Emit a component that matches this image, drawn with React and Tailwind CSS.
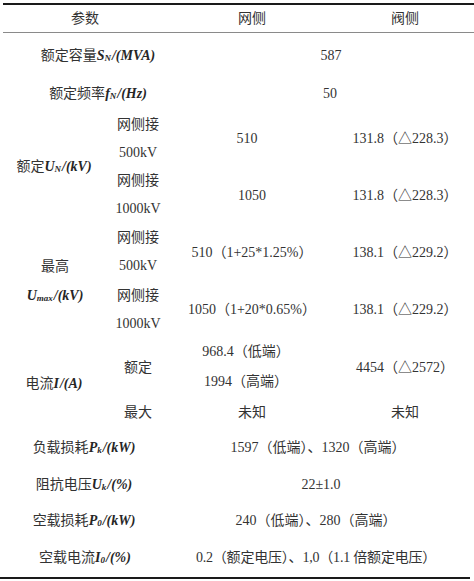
import React from "react";

const FONT = { fontFamily: '"Liberation Serif", "Noto Sans CJK SC", serif' };

function M({ b, s, u }) {
  return (
    <span className="italic font-bold text-[14px] text-[#262626]" style={{ fontFamily: '"Liberation Serif", "DejaVu Serif", serif' }}>
      {b}
      <sub className="text-[9px] relative top-[1px] mr-[1px]">{s}</sub>
      {u}
    </span>
  );
}

const C = ({ className = "", children }) => (
  <div className={"flex flex-col items-center justify-center text-center whitespace-nowrap " + className}>{children}</div>
);

export default function App() {
  return (
    <div className="w-[474px] h-[581px] bg-white text-[14px] text-[#333333] overflow-hidden" style={FONT}>
      <div className="pt-[3px]">
        <div className="ml-[3px] h-[2px] bg-[#1a1a1a]" />
        <div className="grid grid-cols-[108px_60px_168px_138px] grid-rows-[27px_1px_44px_33px_57px_56px_58px_57px_58px_32px_38px_36px_36px_38px]">
          {/* header */}
          <C className="col-span-2 pl-[2px]">参数</C>
          <C>网侧</C>
          <C>阀侧</C>
          <div className="col-span-4 ml-[3px] bg-[#8a8a8a]" />

          {/* r1 */}
          <C className="col-span-2 pl-[28px]">
            <span>额定容量<M b="S" s="N" u="/(MVA)" /></span>
          </C>
          <C className="col-span-2 pl-[20px]">587</C>

          {/* r2 */}
          <C className="col-span-2 pl-[28px]">
            <span>额定频率<M b="f" s="N" u="/(Hz)" /></span>
          </C>
          <C className="col-span-2 pl-[18px]">50</C>

          {/* U_N block */}
          <C className="row-span-2">
            <span>额定<M b="U" s="N" u="/(kV)" /></span>
          </C>
          <C className="leading-[28px]">
            <span>网侧接</span>
            <span>500kV</span>
          </C>
          <C className="pr-[10px]">510</C>
          <C>131.8（△228.3）</C>
          <C className="leading-[28px]">
            <span>网侧接</span>
            <span>1000kV</span>
          </C>
          <C>1050</C>
          <C>131.8（△228.3）</C>

          {/* U_max block */}
          <C className="row-span-2 leading-[29px] pl-[2px]">
            <span>最高</span>
            <span><M b="U" s="max" u="/(kV)" /></span>
          </C>
          <C className="leading-[28px]">
            <span>网侧接</span>
            <span>500kV</span>
          </C>
          <C>510（1+25*1.25%）</C>
          <C>138.1（△229.2）</C>
          <C className="leading-[28px]">
            <span>网侧接</span>
            <span>1000kV</span>
          </C>
          <C>1050（1+20*0.65%）</C>
          <C>138.1（△229.2）</C>

          {/* current block */}
          <C className="row-span-2">
            <span>电流<M b="I" s="" u="/(A)" /></span>
          </C>
          <C>额定</C>
          <C className="leading-[30px] pr-[12px]">
            <span>968.4（低端）</span>
            <span>1994（高端）</span>
          </C>
          <C>4454（△2572）</C>
          <C>最大</C>
          <C>未知</C>
          <C>未知</C>

          {/* bottom rows */}
          <C className="col-span-2">
            <span>负载损耗<M b="P" s="k" u="/(kW)" /></span>
          </C>
          <C className="col-span-2 pr-[6px]">1597（低端）、1320（高端）</C>

          <C className="col-span-2">
            <span>阻抗电压<M b="U" s="k" u="/(%)" /></span>
          </C>
          <C className="col-span-2">22±1.0</C>

          <C className="col-span-2">
            <span>空载损耗<M b="P" s="0" u="/(kW)" /></span>
          </C>
          <C className="col-span-2 pr-[10px]">240（低端）、280（高端）</C>

          <C className="col-span-2 pl-[2px]">
            <span>空载电流<M b="I" s="0" u="/(%)" /></span>
          </C>
          <C className="col-span-2 pr-[10px] tracking-[-0.2px]">0.2（额定电压）、1,0（1.1 倍额定电压）</C>
        </div>
        <div className="mt-[1px] mr-[4px] h-[2px] bg-[#1a1a1a]" />
      </div>
    </div>
  );
}
